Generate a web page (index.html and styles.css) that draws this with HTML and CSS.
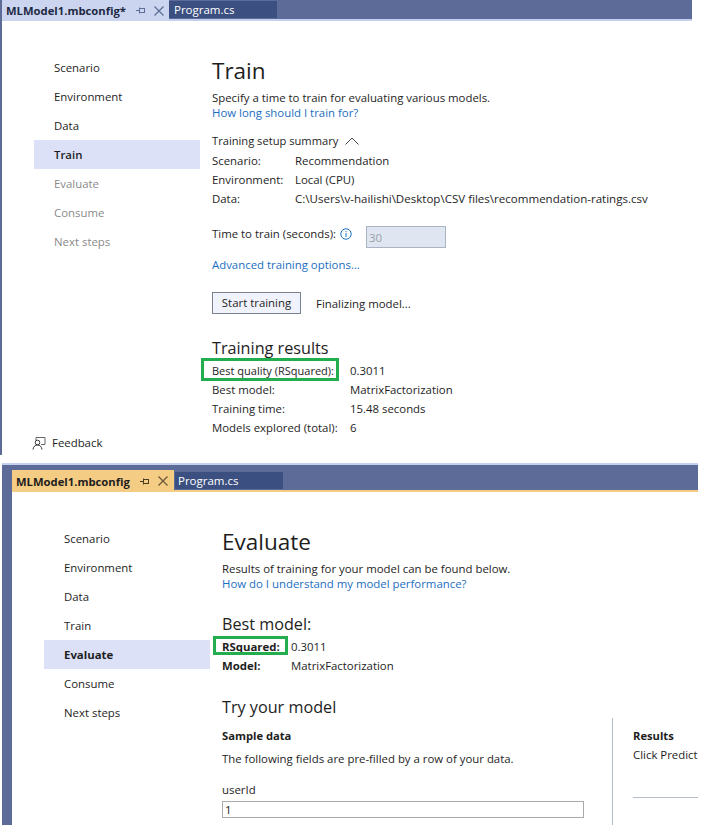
FILE: index.html
```html
<!DOCTYPE html>
<html lang="en">
<head>
<meta charset="utf-8">
<title>Model Builder</title>
<link rel="stylesheet" href="styles.css">
</head>
<body>
<section class="panel panel-train">
  <div class="tabbar tabbar-train">
    <div class="tab tab-active-train"><b>MLModel1.mbconfig*</b>
      <svg class="pin" width="9" height="9" viewBox="0 0 9 9"><path d="M0 4.5h3M3.5 1.5v6M3.5 2.5h5M3.5 6.5h5M8.5 2v5" fill="none" stroke="#5f6f9a"/></svg>
      <svg class="close" width="10" height="10" viewBox="0 0 10 10"><path d="M.5.5l9 9M9.5.5l-9 9" stroke="#5f6f9a" stroke-width="1.3"/></svg>
    </div>
    <div class="tab tab-other">Program.cs</div>
  </div>
  <div class="body body-train">
    <nav class="nav">
      <a class="nav-item">Scenario</a>
      <a class="nav-item">Environment</a>
      <a class="nav-item">Data</a>
      <a class="nav-item nav-current">Train</a>
      <a class="nav-item nav-off">Evaluate</a>
      <a class="nav-item nav-off">Consume</a>
      <a class="nav-item nav-off">Next steps</a>
    </nav>
    <main class="content">
      <h1 class="title">Train</h1>
      <p class="line">Specify a time to train for evaluating various models.</p>
      <p class="line link">How long should I train for?</p>
      <div class="summary-head"><span class="summary-label">Training setup summary</span>
        <svg width="14" height="8" viewBox="0 0 14 8"><path d="M.5 7.500l6.500-6.500 6.500 6.500" fill="none" stroke="#444" stroke-width="1"/></svg>
      </div>
      <dl class="kv kv-summary">
        <dt>Scenario:</dt><dd>Recommendation</dd>
        <dt>Environment:</dt><dd>Local (CPU)</dd>
        <dt>Data:</dt><dd class="path">C:\Users\v-hailishi\Desktop\CSV files\recommendation-ratings.csv</dd>
      </dl>
      <div class="time-row">
        <span class="time-label">Time to train (seconds):</span>
        <svg class="info" width="12" height="12" viewBox="0 0 12 12"><circle cx="6" cy="6" r="5.200" fill="none" stroke="#1b74c5"/><path d="M6 5v4M6 3v1.200" stroke="#1b74c5"/></svg>
        <span class="field-off">30</span>
      </div>
      <p class="row-link link">Advanced training options...</p>
      <div class="start-row">
        <span class="btn">Start training</span>
        <span>Finalizing model...</span>
      </div>
      <h2 class="sub sub-results">Training results</h2>
      <dl class="kv kv-results">
        <dt><span class="mark mark-quality">Best quality (RSquared):</span></dt><dd>0.3011</dd>
        <dt>Best model:</dt><dd>MatrixFactorization</dd>
        <dt>Training time:</dt><dd>15.48 seconds</dd>
        <dt>Models explored (total):</dt><dd>6</dd>
      </dl>
    </main>
    <div class="feedback">
      <svg width="14" height="14" viewBox="0 0 14 14"><path d="M4 1.500h9v7H9M4 1.500v3" fill="none" stroke="#666"/><circle cx="5.500" cy="6.500" r="2.300" fill="none" stroke="#333"/><path d="M1 13.500c.5-3 2-4.500 4.500-4.500s4 1.500 4.500 4.500" fill="none" stroke="#333"/></svg>
      <span>Feedback</span>
    </div>
  </div>
</section>
<section class="panel panel-eval">
  <div class="tabbar tabbar-eval">
    <div class="tab tab-active-eval"><b>MLModel1.mbconfig</b>
      <svg class="pin" width="9" height="9" viewBox="0 0 9 9"><path d="M0 4.500h3M3.500 1.500v6M3.500 2.500h5M3.500 6.500h5M8.500 2v5" fill="none" stroke="#4a3c20"/></svg>
      <svg class="close" width="10" height="10" viewBox="0 0 10 10"><path d="M.5.5l9 9M9.500.5l-9 9" stroke="#6b5a3a" stroke-width="1.300"/></svg>
    </div>
    <div class="tab tab-other">Program.cs</div>
  </div>
  <div class="body body-eval">
    <nav class="nav">
      <a class="nav-item">Scenario</a>
      <a class="nav-item">Environment</a>
      <a class="nav-item">Data</a>
      <a class="nav-item">Train</a>
      <a class="nav-item nav-current">Evaluate</a>
      <a class="nav-item">Consume</a>
      <a class="nav-item">Next steps</a>
    </nav>
    <main class="content">
      <h1 class="title">Evaluate</h1>
      <p class="line">Results of training for your model can be found below.</p>
      <p class="line link">How do I understand my model performance?</p>
      <h2 class="sub sub-best">Best model:</h2>
      <dl class="kv kv-best">
        <dt><span class="mark mark-r">RSquared:</span></dt><dd>0.3011</dd>
        <dt>Model:</dt><dd>MatrixFactorization</dd>
      </dl>
      <h2 class="sub sub-try">Try your model</h2>
      <div class="try">
        <div class="try-left">
          <h3 class="strong">Sample data</h3>
          <p class="prefill">The following fields are pre-filled by a row of your data.</p>
          <label class="user-label">userId</label>
          <div class="field">1</div>
        </div>
        <div class="try-right">
          <h3 class="strong">Results</h3>
          <p>Click Predict</p>
          <div class="rule"></div>
        </div>
      </div>
    </main>
  </div>
</section>
</body>
</html>
```
FILE: styles.css
```css
html, body { margin: 0; padding: 0; background: #fff; }
body {
  width: 718px; height: 836px; overflow: hidden;
  font-family: "Open Sans", "Noto Sans", sans-serif;
  font-size: 11.4px; line-height: 19px; color: #1e1e1e;
}
p, h1, h2, h3, dl, dd, dt { margin: 0; padding: 0; font-weight: normal; }
.panel { box-sizing: border-box; }
.panel-train { width: 692px; height: 455px; border-left: 2px solid #5d6b99; margin-bottom: 8px; }
.panel-eval { position: relative; width: 696px; height: 362px; margin-left: 2px; border-left: 10px solid #5d6b99; }
.panel-eval::before { content: ""; position: absolute; left: -10px; top: 0; width: 10px; height: 2px; background: #c5d0ee; }
.tabbar { display: flex; background: #5d6b99; box-sizing: border-box; align-items: flex-start; }
.tabbar-train { height: 21px; border-bottom: 2px solid #c5d0ee; }
.tabbar-eval { height: 29px; border-bottom: 2px solid #f5cc84; padding-top: 7px; background: linear-gradient(#c5d0ee 2px, #5d6b99 2px); }
.tab { display: flex; align-items: center; box-sizing: border-box; font-size: 11.25px; white-space: nowrap; flex: none; }
.tab b { font-weight: 700; }
.tab-active-train { width: 167px; height: 21px; background: #ccd5f0; color: #1e2a44; padding-left: 4px; }
.tab-active-eval { width: 162px; height: 22px; background: #f5cc84; color: #1e1e1e; padding-left: 4px; }
.pin { margin-left: 10px; }
.close { margin-left: 9px; }
.tab-other { width: 108px; height: 17px; margin-top: 1px; background: #3b4f81; color: #fff; padding-left: 5px; font-size: 11.5px; }
.panel-eval .tab-other { margin-left: 1px; margin-top: 2px; height: 17px; padding-left: 3px; }
.body { position: relative; display: flex; padding-top: 32px; }
.body-train { height: 434px; box-sizing: border-box; }
.nav { width: 166px; margin-left: 32px; flex: none; display: flex; flex-direction: column; }
.nav-item { height: 29px; line-height: 29px; padding-left: 20px; box-sizing: border-box; }
.nav-current { background: #dce1f7; font-weight: 600; }
.panel-eval .nav-current { font-weight: 700; }
.nav-off { color: #8a8a8a; }
.content { margin-left: 12px; flex: 1; min-width: 0; padding-top: 1px; }
.title { font-size: 22.5px; line-height: 34px; padding-bottom: 2px; }
.line { line-height: 15px; }
.link { color: #1b6ec2; }
.summary-head { margin-top: 11px; display: flex; align-items: center; }
.summary-label { width: 133px; white-space: nowrap; font-size: 11.15px; }
.kv { display: grid; grid-auto-rows: 19px; }
.kv-summary { grid-template-columns: 83px 1fr; margin-top: 1px; }
.path { font-size: 11.55px; white-space: nowrap; }
.kv-results { grid-template-columns: 138px 1fr; margin-top: 1px; }
.kv-best { grid-template-columns: 69px 1fr; margin-top: 1px; }
.kv-best dt { font-weight: 700; }
.time-row { display: flex; align-items: flex-start; margin-top: 18px; height: 22px; }
.time-label { line-height: 16px; width: 124px; white-space: nowrap; }
.info { margin: 2px 0 0 4px; flex: none; }
.field-off { box-sizing: border-box; width: 80px; height: 22px; margin-left: 14px; background: #dfe6f1; border: 1px solid #a9b4c4; color: #9aa0aa; padding-left: 2px; line-height: 22px; }
.row-link { margin-top: 7px; }
.start-row { display: flex; align-items: center; gap: 15px; margin-top: 18px; }
.btn { box-sizing: border-box; width: 89px; height: 22px; line-height: 20px; text-align: center; background: #f0f3fc; border: 1px solid #7a8290; }
.sub { font-size: 16.2px; line-height: 24px; }
.sub-results { margin-top: 22px; }
.sub-best { margin-top: 21px; }
.sub-try { margin-top: 20px; }
.mark { display: inline-block; position: relative; white-space: nowrap; }
.mark-quality { font-size: 11px; }
.mark::after { content: ""; position: absolute; box-sizing: border-box; border: 3px solid #22ad4e; }
.mark-quality::after { left: -11px; top: -3px; width: 138px; height: 23px; }
.mark-r::after { left: -9px; top: -1px; width: 75px; height: 19px; }
.strong { font-weight: 700; font-size: 11.2px; line-height: 19px; }
.try { display: flex; margin-top: 7px; }
.try-left { width: 390px; flex: none; }
.prefill { margin-top: 4px; }
.user-label { display: block; margin-top: 12px; }
.field { box-sizing: border-box; width: 362px; height: 17px; border: 1px solid #aaa; line-height: 15px; padding-left: 2px; margin-top: 2px; }
.try-right { border-left: 1px solid #b5bcc9; padding: 8px 0 0 20px; height: 107px; width: 86px; flex: none; margin-top: -8px; box-sizing: border-box; white-space: nowrap; }
.rule { border-top: 1px solid #b5bcc9; margin-top: 33px; width: 65px; }
.feedback { position: absolute; left: 30px; top: 412px; display: flex; align-items: center; gap: 6px; }
```
